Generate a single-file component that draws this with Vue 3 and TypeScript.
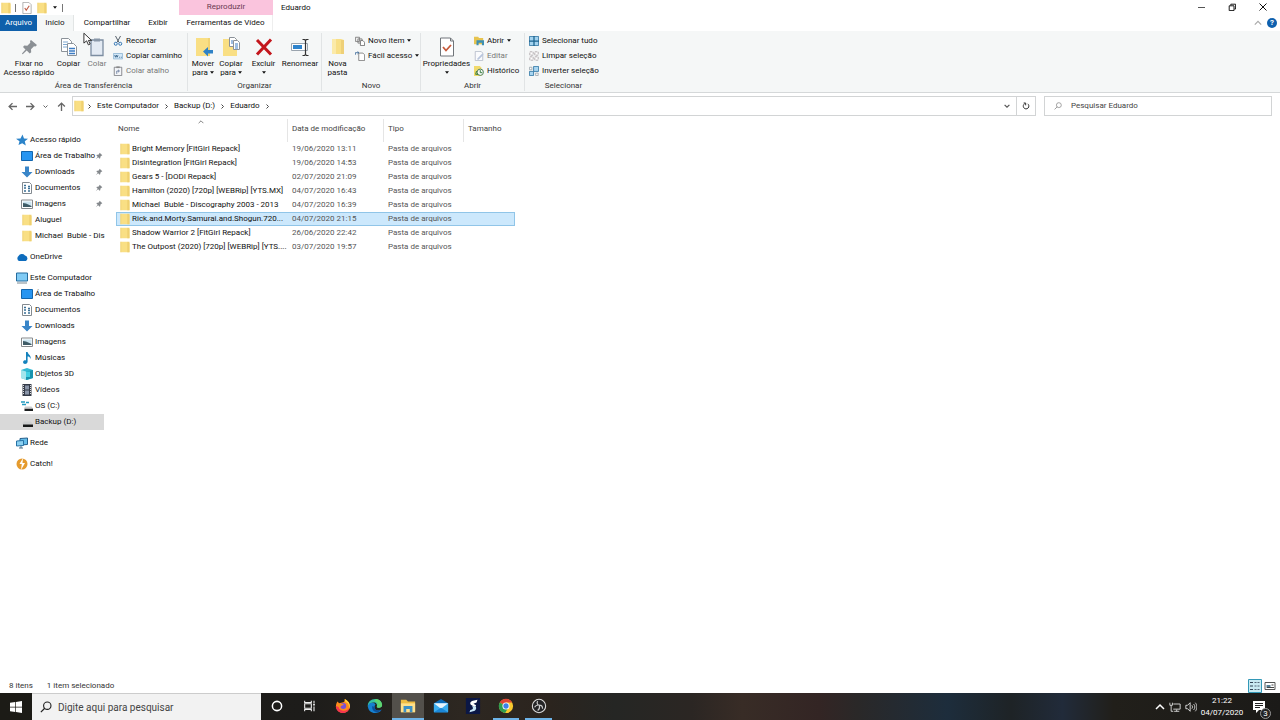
<script setup lang="ts">
import { ref } from 'vue'

interface NavItem { label: string; icon: string; pinned?: boolean; root?: boolean }
interface FileRow { name: string; date: string }
interface SmallCmd { label: string; icon: string; menu?: boolean; off?: boolean }
interface BigCmd { lines: string[]; icon: string; menu?: boolean; off?: boolean }
interface Group { key: string; title: string; big: BigCmd[]; small: SmallCmd[] }

const groups: Group[] = [
  {
    key: 'clipboard',
    title: 'Área de Transferência',
    big: [
      { lines: ['Fixar no', 'Acesso rápido'], icon: 'pin' },
      { lines: ['Copiar'], icon: 'copy' },
      { lines: ['Colar'], icon: 'paste', off: true },
    ],
    small: [
      { label: 'Recortar', icon: 'cut' },
      { label: 'Copiar caminho', icon: 'path' },
      { label: 'Colar atalho', icon: 'shortcut', off: true },
    ],
  },
  {
    key: 'organize',
    title: 'Organizar',
    big: [
      { lines: ['Mover', 'para'], icon: 'move', menu: true },
      { lines: ['Copiar', 'para'], icon: 'copyto', menu: true },
      { lines: ['Excluir', ''], icon: 'delete', menu: true },
      { lines: ['Renomear'], icon: 'rename' },
    ],
    small: [],
  },
  {
    key: 'new',
    title: 'Novo',
    big: [{ lines: ['Nova', 'pasta'], icon: 'newfolder' }],
    small: [
      { label: 'Novo item', icon: 'newitem', menu: true },
      { label: 'Fácil acesso', icon: 'easy', menu: true },
    ],
  },
  {
    key: 'open',
    title: 'Abrir',
    big: [{ lines: ['Propriedades', ''], icon: 'props', menu: true }],
    small: [
      { label: 'Abrir', icon: 'open', menu: true },
      { label: 'Editar', icon: 'edit', off: true },
      { label: 'Histórico', icon: 'history' },
    ],
  },
  {
    key: 'select',
    title: 'Selecionar',
    big: [],
    small: [
      { label: 'Selecionar tudo', icon: 'selall' },
      { label: 'Limpar seleção', icon: 'selnone' },
      { label: 'Inverter seleção', icon: 'selinv' },
    ],
  },
]

const nav: NavItem[][] = [
  [
    { label: 'Acesso rápido', icon: 'star', root: true },
    { label: 'Área de Trabalho', icon: 'desktop', pinned: true },
    { label: 'Downloads', icon: 'down', pinned: true },
    { label: 'Documentos', icon: 'doc', pinned: true },
    { label: 'Imagens', icon: 'image', pinned: true },
    { label: 'Aluguel', icon: 'folder' },
    { label: 'Michael  Bublé - Dis', icon: 'folder' },
  ],
  [{ label: 'OneDrive', icon: 'cloud', root: true }],
  [
    { label: 'Este Computador', icon: 'pc', root: true },
    { label: 'Área de Trabalho', icon: 'desktop' },
    { label: 'Documentos', icon: 'doc' },
    { label: 'Downloads', icon: 'down' },
    { label: 'Imagens', icon: 'image' },
    { label: 'Músicas', icon: 'music' },
    { label: 'Objetos 3D', icon: 'cube' },
    { label: 'Vídeos', icon: 'video' },
    { label: 'OS (C:)', icon: 'osdrive' },
    { label: 'Backup (D:)', icon: 'drive' },
  ],
  [{ label: 'Rede', icon: 'network', root: true }],
  [{ label: 'Catch!', icon: 'catch', root: true }],
]

const files: FileRow[] = [
  { name: 'Bright Memory [FitGirl Repack]', date: '19/06/2020 13:11' },
  { name: 'Disintegration [FitGirl Repack]', date: '19/06/2020 14:53' },
  { name: 'Gears 5 - [DODI Repack]', date: '02/07/2020 21:09' },
  { name: 'Hamilton (2020) [720p] [WEBRip] [YTS.MX]', date: '04/07/2020 16:43' },
  { name: 'Michael  Bublé - Discography 2003 - 2013', date: '04/07/2020 16:39' },
  { name: 'Rick.and.Morty.Samurai.and.Shogun.720...', date: '04/07/2020 21:15' },
  { name: 'Shadow Warrior 2 [FitGirl Repack]', date: '26/06/2020 22:42' },
  { name: 'The Outpost (2020) [720p] [WEBRip] [YTS....', date: '03/07/2020 19:57' },
]

const crumbs: string[] = ['Este Computador', 'Backup (D:)', 'Eduardo']
const apps: { icon: string; name: string; state?: string }[] = [
  { icon: 'cortana', name: 'Cortana' },
  { icon: 'taskview', name: 'Visão de Tarefas' },
  { icon: 'firefox', name: 'Firefox' },
  { icon: 'edge', name: 'Edge' },
  { icon: 'explorer', name: 'Explorador de Arquivos', state: 'active' },
  { icon: 'mail', name: 'Email' },
  { icon: 'sapp', name: 'S' },
  { icon: 'chrome', name: 'Chrome', state: 'running' },
  { icon: 'obs', name: 'OBS', state: 'running' },
]

const selected = ref(5)
const query = ref('')
const taskQuery = ref('')
</script>

<template>
  <svg class="sprite" aria-hidden="true">
    <symbol id="folder" viewBox="0 0 16 16"><path d="M2 1h9l3 2v12H2z" fill="#f9df84" /><path d="M11 1h3v14h-3z" fill="#efd070" /><path d="M2 1h1v14H2z" fill="#edd073" /></symbol>
    <symbol id="sheet" viewBox="0 0 16 16"><path d="M2.5.5h8l3 3v12h-11z" fill="#fff" stroke="#999" /><path d="m5 8 2 3 4-6" fill="none" stroke="#c0604a" stroke-width="1.6" /></symbol>
    <symbol id="pin" viewBox="0 0 20 20"><path d="m12 3 6 5-1.500 1.500-1.500-.3-3 3 .2 3-1.500 1.300-3-3L4 17l-1 .2.2-1L6.500 12.500 4 10l1.300-1.500 3 .2 3-3L11 4z" fill="#8b9095" /></symbol>
    <symbol id="copy" viewBox="0 0 18 20"><path d="M1.500 1.500h7l3 3v10h-10z" fill="#fff" stroke="#8b9299" /><path d="M3 5h5M3 7.500h5M3 10h4" stroke="#7da7d0" /><path d="M7.500 6.500h6l3 3v9h-9z" fill="#fff" stroke="#8b9299" /><path d="M9 11.500h6M9 14h6M9 16.500h6" stroke="#3c7cc4" stroke-width="1.300" /></symbol>
    <symbol id="paste" viewBox="0 0 18 20"><path d="M3 3h12v15.500H3z" fill="#e3eaf3" stroke="#7c8da1" stroke-width="1.300" /><path d="M6 1.500h6v3H6z" fill="#8997a8" /></symbol>
    <symbol id="cut" viewBox="0 0 12 12"><path d="M3 0l4 7.500M9 0 5 7.500" stroke="#555f69" stroke-width="1.200" fill="none" /><circle cx="3.300" cy="9.300" r="1.800" fill="none" stroke="#3276b5" stroke-width="1.200" /><circle cx="8.700" cy="9.300" r="1.800" fill="none" stroke="#3276b5" stroke-width="1.200" /></symbol>
    <symbol id="path" viewBox="0 0 12 12"><path d="M.5 3h11v6.500H.5z" fill="#d3e8f8" stroke="#8fb6d4" /><path d="m2 5 1 2.500L4 5l1 2.500L6 5M7.500 7.500h1M9.500 7.500h1" stroke="#2d5a82" fill="none" /></symbol>
    <symbol id="shortcut" viewBox="0 0 12 12"><path d="M1.500 1.500h9v10h-9z" fill="#f3f5f8" stroke="#77797f" /><path d="M4 .5h4v2H4z" fill="#888" /><path d="M4.500 9.500V6h3M6 4.500 7.700 6 6 7.500" fill="none" stroke="#66789b" /></symbol>
    <symbol id="move" viewBox="0 0 20 20"><path d="M3 1h14v18H3z" fill="#f9df84" /><path d="M15 1h2v18h-2z" fill="#f1d374" /><path d="m10 14.500 5-4.500v3h5v3.500h-5v3z" fill="#2f82c6" /></symbol>
    <symbol id="copyto" viewBox="0 0 20 20"><path d="M2 2h14v17H2z" fill="#f9df84" /><path d="M8.500.5h5l2 2v7h-7z" fill="#fff" stroke="#8b9299" /><path d="M12.500 3.500h4l2 2v7h-6z" fill="#fff" stroke="#8b9299" /><path d="M14 7h3M14 9h3M14 11h3M10 4h2M10 6h2" stroke="#3c7cc4" /></symbol>
    <symbol id="delete" viewBox="0 0 20 20"><path d="m3 3 14 14.500M17 2.500 3 17.500" stroke="#c3161c" stroke-width="3" fill="none" /></symbol>
    <symbol id="rename" viewBox="0 0 20 20"><path d="M1.500 6.500h16v7h-16z" fill="#fff" stroke="#9aa4ae" /><path d="M3 8h9v4H3z" fill="#2e83cc" /><path d="M12.500 2.500h2l1 1 1-1h2M15.500 3.500v14M12.500 18.500h2l1-1 1 1h2" fill="none" stroke="#333" stroke-width="1.200" /></symbol>
    <symbol id="newfolder" viewBox="0 0 20 20"><path d="M4 2h9l3 1v14H4z" fill="#f8df86" /><path d="M4 2h4v15H4z" fill="#fbeaa9" /><path d="M13 3h3v14h-3z" fill="#eed078" /></symbol>
    <symbol id="newitem" viewBox="0 0 12 12"><path d="M.5 1.500h5v5h-5zM3.500 3.500h5v5h-5z" fill="#eee" stroke="#777" /><path d="M6.500 5.500h3l2 2v4h-5z" fill="#fff" stroke="#666" /></symbol>
    <symbol id="easy" viewBox="0 0 12 12"><path d="M4.500 2.500h5l2 2v7h-7z" fill="#fff" stroke="#777" /><path d="M.5 4.500V2h4M3 .5 4.700 2 3 3.500" fill="none" stroke="#3a6797" /></symbol>
    <symbol id="props" viewBox="0 0 18 20"><path d="M2.500 1h10l3 3v15h-13z" fill="#fff" stroke="#70757a" /><path d="M12.500 1v3h3" fill="none" stroke="#70757a" /><path d="m5 10 3 3.500L13 8" fill="none" stroke="#c65a3b" stroke-width="1.800" /></symbol>
    <symbol id="open" viewBox="0 0 12 12"><path d="M0 1h5l1 1.500h5V10H0z" fill="#e7c44f" /><path d="M3 5h9v6H9.500V8h-4v3H3z" fill="#3e8fb2" /></symbol>
    <symbol id="edit" viewBox="0 0 12 12"><path d="M1.500.5h7l2 2v9h-9z" fill="#fafbfd" stroke="#b3bac8" /><path d="m4 9 6-6 1.500 1.500-6 6H4z" fill="#b9c6dd" /></symbol>
    <symbol id="history" viewBox="0 0 12 12"><path d="M0 0h7l2 2v10H0z" fill="#f1da6b" /><circle cx="7.500" cy="7.500" r="3.800" fill="#f5f7f5" stroke="#53825a" stroke-width="1.200" /><path d="M7.500 5v3H10M3 6l-1 4h3" stroke="#398044" fill="none" stroke-width="1.200" /></symbol>
    <symbol id="selall" viewBox="0 0 12 12"><path d="M.5.5h11v11H.5z" fill="#a4d3ef" stroke="#2b719f" /><path d="M6 0v12M0 6h12" stroke="#1b638f" stroke-width="1.500" /></symbol>
    <symbol id="selnone" viewBox="0 0 12 12"><path d="M1 1h4v4H1zM7 1h4v4H7zM1 7h4v4H1zM7 7h4v4H7z" fill="#fff" stroke="#a79fa2" stroke-dasharray="3 1" /></symbol>
    <symbol id="selinv" viewBox="0 0 12 12"><path d="M5.500.5h6v6h-6zM.5 6.500h5v5h-5z" fill="#a8d5f0" stroke="#2c74a2" /><path d="M.5 1.500h3v3h-3zM8 8.500h3v3H8z" fill="#fff" stroke="#98a2a9" /></symbol>
    <symbol id="star" viewBox="0 0 12 12"><path d="m6.500.5 1.500 4 4 .3-3.200 2.500 1 4.200-3.600-2.200L2.500 11l1-3.800L0 4.800l4.500-.3z" fill="#2b83c9" /></symbol>
    <symbol id="desktop" viewBox="0 0 12 12"><path d="M.5 1.500h11v9H.5z" fill="#2795f1" stroke="#1265ad" /></symbol>
    <symbol id="down" viewBox="0 0 12 12"><path d="M4 .5h4v5.500h3.500L6 11.500.5 6H4z" fill="#3985c8" /></symbol>
    <symbol id="doc" viewBox="0 0 12 12"><path d="M1.500.5h7l2 2v9h-9z" fill="#fff" stroke="#838a90" /><path d="M3 3.500h2M3 6h2M3 9h2M7 4.500h2M7 6.500h2M7 9h2" stroke="#3b7096" stroke-width="1.400" /></symbol>
    <symbol id="image" viewBox="0 0 12 12"><path d="M.5 2h11v8.500H.5z" fill="#fff" stroke="#85898c" /><path d="M2 3.500h8.500V9H2z" fill="#cbe4f0" /><path d="M2 5l3 .5L10.500 8v1H2z" fill="#3f5c67" /></symbol>
    <symbol id="cloud" viewBox="0 0 12 12"><path d="M3 10a3 3 0 0 1-.5-5A4 4 0 0 1 9 4.500 3 3 0 0 1 10 10z" fill="#0d6cbd" /></symbol>
    <symbol id="pc" viewBox="0 0 12 12"><path d="M.5 1h11v8H.5z" fill="#80cbf5" stroke="#256c9e" /><path d="M1 11h10" stroke="#7a8992" /></symbol>
    <symbol id="music" viewBox="0 0 12 12"><path d="M5 0h1.600c.5 3 4 3 2.800 7C9 5 8 4.500 6.600 4.500V10c-.5 2.500-4.500 2.500-4.500.3C2.100 8.500 4 8 5 8.500z" fill="#1482bd" /></symbol>
    <symbol id="cube" viewBox="0 0 12 12"><path d="M0 2 6 0l6 2v8l-6 2-6-2z" fill="#32bad4" /><path d="M0 2l5 1.500V12L0 10z" fill="#a3e5ec" /><path d="M5 3.500 12 2v8l-7 2z" fill="#1993ae" /><path d="M5 3.500h4V9H5z" fill="#42cfe2" /></symbol>
    <symbol id="video" viewBox="0 0 12 12"><path d="M1.500 0h9v12h-9z" fill="#343b48" /><path d="M4 1.500h4v4H4zM4 6.500h4v4H4z" fill="#8a95a9" /><path d="M2.500 1v10M9.500 1v10" stroke="#ddd" stroke-dasharray="1 1" /></symbol>
    <symbol id="osdrive" viewBox="0 0 12 12"><path d="M0 2h4M1 4.500h4M5 2.500h3" stroke="#229ac0" stroke-width="1.400" /><path d="M3.500 8.500H12V11H3.500z" fill="#1c1f20" /><path d="M4 6.500h6.500l1.500 2H3z" fill="#c9cccd" /></symbol>
    <symbol id="drive" viewBox="0 0 12 12"><path d="M3 5.500h7l2 3H1z" fill="#cdcfd0" /><path d="M2 8.500h10V11H2z" fill="#17191a" /></symbol>
    <symbol id="network" viewBox="0 0 12 12"><path d="M4 1.500 11.500 1v6.500L4 8z" fill="#64bdea" stroke="#245f8c" /><path d="M.5 4 7.500 3.500v5L.5 9z" fill="#8bd0f1" stroke="#2672a5" /><path d="M3 11h4M5 9v2" stroke="#4a6e88" /></symbol>
    <symbol id="catch" viewBox="0 0 12 12"><circle cx="6" cy="6" r="5.500" fill="#e59b2e" /><path d="M7 0 3.500 6h2.300L5 12 9 5H6.500z" fill="#fff" /></symbol>
    <symbol id="smallpin" viewBox="0 0 12 12"><path d="m7 1 4 4-1.300.5L8 7v2L7 10 4.800 7.700 1 11l3-4L2 5l1-1h2L6.500 2.300z" fill="#84888c" /></symbol>
    <symbol id="caret" viewBox="0 0 6 4"><path d="M0 0h6L3 4z" fill="currentColor" /></symbol>
    <symbol id="chev" viewBox="0 0 10 10"><path d="m3 1 4 4-4 4" fill="none" stroke="currentColor" stroke-width="2" /></symbol>
    <symbol id="chevdown" viewBox="0 0 10 10"><path d="m1 3 4 4 4-4" fill="none" stroke="currentColor" stroke-width="2" /></symbol>
    <symbol id="chevup" viewBox="0 0 10 10"><path d="m1 7 4-4 4 4" fill="none" stroke="currentColor" stroke-width="1.500" /></symbol>
    <symbol id="left" viewBox="0 0 12 12"><path d="M12 6H2M6 1.500 1.500 6 6 10.500" fill="none" stroke="currentColor" stroke-width="1.800" /></symbol>
    <symbol id="right" viewBox="0 0 12 12"><path d="M0 6h10M6 1.500 10.500 6 6 10.500" fill="none" stroke="currentColor" stroke-width="1.800" /></symbol>
    <symbol id="up" viewBox="0 0 12 12"><path d="M6 12V2M1.500 6 6 1.500 10.500 6" fill="none" stroke="currentColor" stroke-width="1.800" /></symbol>
    <symbol id="refresh" viewBox="0 0 12 12"><path d="M4 2.500a4.200 4.200 0 1 0 4.500.2M2.500 1.500h3v3.500" fill="none" stroke="#333" stroke-width="1.500" /></symbol>
    <symbol id="lens" viewBox="0 0 14 14"><circle cx="8.500" cy="5.500" r="4.300" fill="none" stroke="currentColor" stroke-width="1.300" /><path d="M5.500 8.500 1 13" stroke="currentColor" stroke-width="1.400" /></symbol>
    <symbol id="min" viewBox="0 0 10 10"><path d="M2 5.500h7" stroke="#555" /></symbol>
    <symbol id="restore" viewBox="0 0 10 10"><path d="M1.500 3.500h6v6h-6zM3.500 3V1.500h6v6H8" fill="none" stroke="#111" stroke-width="1.200" /></symbol>
    <symbol id="close" viewBox="0 0 10 10"><path d="m1.500 1.500 7 7M8.500 1.500l-7 7" stroke="#111" /></symbol>
    <symbol id="windows" viewBox="0 0 12 12"><path d="M0 1.700 5.300 1v4.700H0zM6 .9 12 0v5.700H6zM0 6.400h5.300V11L0 10.300zM6 6.400h6V12l-6-.9z" fill="#fff" /></symbol>
    <symbol id="cortana" viewBox="0 0 18 18"><circle cx="9" cy="9" r="5.200" fill="none" stroke="#fff" stroke-width="1.700" /></symbol>
    <symbol id="taskview" viewBox="0 0 18 18"><path d="M3 6.500h7.500v5H3zM3 3v2h7.500V3M3 15v-2h7.500v2M13.500 3v3M13.500 9.500V15" fill="none" stroke="#eee" stroke-width="1.200" /><path d="M12.500 6.500h2v2h-2z" fill="#eee" /></symbol>
    <symbol id="firefox" viewBox="0 0 18 18"><path d="M11 1c4 2 6 5 5.800 9A8 8 0 0 1 1 10c0-3 1-5 2-6l1.500 2L8 5c2 0 3-1 3-4z" fill="#ff8b1b" /><path d="M11 1c5 3 7 7 5 11 0-4-1-6-3-7-2-1-2-2-2-4z" fill="#ffd23c" /><path d="M1 9c0 5 4 8 8 8s7-3 7.500-6C13 16 5 15 4 10z" fill="#f5364f" /><circle cx="9.300" cy="9" r="3.300" fill="#7951d5" /><path d="M5 7c2-1 5 0 5 1-2 0-3 1-4 2z" fill="#ff8b1b" /></symbol>
    <symbol id="edge" viewBox="0 0 18 18"><path d="M1 10C0 4 5 1 9 1c5 0 8 3 8 7 0 3-4 4-6 2 1-3-1-5-3-5-4 0-6 2-7 5z" fill="#34c1a3" /><path d="M10 1c5 .5 7 4 7 7 0 3-4 4-6 2 2-4 0-6-3-6z" fill="#5fd46e" /><path d="M1 9c0 5 4 8 8 8 3 0 6-1 7.500-4-4 2-8 1-8-3 0-2 1-2 1-3-2-3-8-2-8.500 2z" fill="#1680cf" /><path d="M6 9c-1 4 2 7 6 7 2-.4 4-2 4.500-3-4 2-8 1-8-3z" fill="#0b4f9a" /></symbol>
    <symbol id="explorer" viewBox="0 0 18 18"><path d="M1 2h6l2 2h8v12H1z" fill="#f0bd42" /><path d="M1 6h16v10H1z" fill="#ffe08b" /><path d="M4 9h10v7h-3v-3.500H7V16H4z" fill="#3c90c6" /></symbol>
    <symbol id="mail" viewBox="0 0 18 18"><path d="m1 6 8-5 8 5v10H1z" fill="#0c6bb9" /><path d="M1 6h16v10H1z" fill="#3badef" /><path d="m1 6 8 6 8-6z" fill="#e8f5fe" /><path d="m1 16 8-5 8 5z" fill="#1b87d8" /></symbol>
    <symbol id="sapp" viewBox="0 0 18 18"><path d="M1 0h16v18H1z" fill="#0b1745" /><path d="M14 2 9 3C6 3.500 5 6 7 8l4 2c1 0 2-1 1-2L9.500 6.500 13 5z" fill="#fff" /><path d="m5 16 4-1c4-1 4-4 3-5.500L8 9c1 2 1.500 3 0 4l-2 .5z" fill="#c9e7f8" /></symbol>
    <symbol id="chrome" viewBox="0 0 18 18"><circle cx="9" cy="9" r="8" fill="#f9c92e" /><path d="M9 9 2 5a8 8 0 0 1 14 0H9z" fill="#df4535" /><path d="M9 9 2 5a8 8 0 0 0 6 12l4-7z" fill="#2f9e50" /><circle cx="9" cy="9" r="4" fill="#fff" /><circle cx="9" cy="9" r="3" fill="#3c82e8" /></symbol>
    <symbol id="obs" viewBox="0 0 18 18"><circle cx="9" cy="9" r="7.500" fill="#242426" stroke="#ddd" stroke-width="1.200" /><path d="M7.500 3.500c-1.500 2.500 0 4.500 2 4.500s3.500 1.500 3.500 4M9.500 8c-2.500-.5-4.500.5-5.500 2.500M9.500 8.500c.5 2.500-.5 4.500-2 5.500" fill="none" stroke="#ccc" stroke-width="1.300" /></symbol>
    <symbol id="lan" viewBox="0 0 14 12"><path d="M5 2.500h8v6H5M9 9v2M6 11h6M1 1v3h3V1M2.500 4v7H5" fill="none" stroke="#e8e8e8" /></symbol>
    <symbol id="speaker" viewBox="0 0 14 12"><path d="M1 4h2l3-3v10L3 8H1z" fill="none" stroke="#eee" /><path d="M8 4c1 1 1 3 0 4M10 2.500c2 2 2 5 0 7M12 1c2.500 3 2.500 7 0 10" fill="none" stroke="#ddd" /></symbol>
    <symbol id="note" viewBox="0 0 14 14"><path d="M1 1h12v9H7l-3 3v-3H1z" fill="#fff" /><path d="M3 3.500h8M3 5.500h8M3 7.500h5" stroke="#222" /></symbol>
    <symbol id="details" viewBox="0 0 14 14"><path d="M.5.5h13v13H.5z" fill="#c9eaf2" stroke="#3398b7" /><path d="M2 3.500h3M2 7h3M2 10.500h3" stroke="#345" /><path d="M6.500 3.500h6M6.500 7h6M6.500 10.500h6" stroke="#567" stroke-dasharray="2 1" /></symbol>
    <symbol id="large" viewBox="0 0 12 12"><path d="M1 2.500h10v7H1z" fill="#fff" stroke="#555" /><path d="M2.500 5h4v3h-4z" fill="#577f94" /><path d="M7.500 5h2M3 7.500h7" stroke="#444" /></symbol>
    <symbol id="arrow" viewBox="0 0 10 16"><path d="M1 1v11l3-2.500 2 4.500 2-1-2-4h3.500z" fill="#fff" stroke="#222" /></symbol>
  </svg>

  <div class="window">
    <header class="top">
      <div class="top-left">
        <div class="quick">
          <svg class="i12"><use href="#folder" /></svg><span class="bar"></span>
          <button class="plain" aria-label="Propriedades"><svg class="i12"><use href="#sheet" /></svg></button>
          <button class="plain" aria-label="Nova pasta"><svg class="i12"><use href="#folder" /></svg></button>
          <button class="plain" aria-label="Personalizar"><svg class="caret"><use href="#caret" /></svg></button><span class="bar"></span>
        </div>
        <nav class="tabs">
          <button class="tab file">Arquivo</button>
          <button class="tab active">Início</button>
          <button class="tab share">Compartilhar</button>
          <button class="tab view">Exibir</button>
        </nav>
      </div>
      <div class="context">
        <div class="context-title">Reproduzir</div>
        <button class="tab tools">Ferramentas de Vídeo</button>
      </div>
      <div class="caption">Eduardo</div>
      <div class="top-right">
        <div class="winbtns">
          <button class="plain" aria-label="Minimizar"><svg class="i10"><use href="#min" /></svg></button>
          <button class="plain" aria-label="Restaurar"><svg class="i8"><use href="#restore" /></svg></button>
          <button class="plain" aria-label="Fechar"><svg class="i10"><use href="#close" /></svg></button>
        </div>
        <div class="helpers">
          <button class="plain faint" aria-label="Recolher"><svg class="i8"><use href="#chevup" /></svg></button>
          <button class="help">?</button>
        </div>
      </div>
    </header>

    <section class="ribbon">
      <div v-for="g in groups" :key="g.key" class="group" :class="g.key">
        <div class="cmds">
          <button v-for="b in g.big" :key="b.icon" class="big" :class="{ off: b.off }">
            <svg class="i20"><use :href="'#' + b.icon" /></svg>
            <span v-for="(l, i) in b.lines" :key="i" class="line">{{ l }}<svg v-if="b.menu && i === b.lines.length - 1" class="caret"><use href="#caret" /></svg></span>
          </button>
          <div v-if="g.small.length" class="smalls">
            <button v-for="s in g.small" :key="s.icon" class="small" :class="{ off: s.off }">
              <svg class="i10"><use :href="'#' + s.icon" /></svg>{{ s.label }}<svg v-if="s.menu" class="caret"><use href="#caret" /></svg>
            </button>
          </div>
        </div>
        <div class="title">{{ g.title }}</div>
      </div>
    </section>

    <section class="address">
      <div class="history">
        <button class="plain" aria-label="Voltar"><svg class="i9"><use href="#left" /></svg></button>
        <button class="plain" aria-label="Avançar"><svg class="i9"><use href="#right" /></svg></button>
        <button class="plain" aria-label="Recentes"><svg class="i5"><use href="#chevdown" /></svg></button>
        <button class="plain" aria-label="Acima"><svg class="i9"><use href="#up" /></svg></button>
      </div>
      <div class="pathbox">
        <svg class="i12"><use href="#folder" /></svg>
        <svg class="i5 sep first"><use href="#chev" /></svg>
        <template v-for="c in crumbs" :key="c">
          <button class="crumb">{{ c }}</button>
          <svg class="i5 sep"><use href="#chev" /></svg>
        </template>
        <button class="plain drop" aria-label="Locais"><svg class="i6"><use href="#chevdown" /></svg></button>
        <button class="plain reload" aria-label="Atualizar"><svg class="i8"><use href="#refresh" /></svg></button>
      </div>
      <label class="searchbox">
        <svg class="i8"><use href="#lens" /></svg>
        <input v-model="query" type="text" placeholder="Pesquisar Eduardo" aria-label="Pesquisar Eduardo" />
      </label>
    </section>

    <main class="body">
      <nav class="side">
        <ul v-for="(s, si) in nav" :key="si">
          <li v-for="n in s" :key="n.label">
            <a href="#" :class="{ root: n.root, current: n.icon === 'drive' }" @click.prevent>
              <svg class="i12"><use :href="'#' + n.icon" /></svg>
              <span class="name">{{ n.label }}</span>
              <svg v-if="n.pinned" class="i8"><use href="#smallpin" /></svg>
            </a>
          </li>
        </ul>
      </nav>
      <div class="list">
        <table>
          <colgroup><col class="c-name" /><col class="c-date" /><col class="c-type" /><col class="c-size" /></colgroup>
          <thead>
            <tr>
              <th class="sorted">Nome<svg class="i6 mark"><use href="#chevup" /></svg></th>
              <th>Data de modificação</th><th>Tipo</th><th>Tamanho</th>
            </tr>
          </thead>
          <tbody>
            <tr v-for="(f, i) in files" :key="f.name" :class="{ picked: i === selected }" @click="selected = i">
              <td><div class="file-name"><svg class="i12"><use href="#folder" /></svg><span>{{ f.name }}</span></div></td>
              <td>{{ f.date }}</td><td>Pasta de arquivos</td><td></td>
            </tr>
          </tbody>
        </table>
      </div>
    </main>

    <footer class="status">
      <span>8 itens</span><span>1 item selecionado</span>
      <div class="modes">
        <button class="plain" aria-label="Detalhes"><svg class="i14"><use href="#details" /></svg></button>
        <button class="plain" aria-label="Ícones grandes"><svg class="i12"><use href="#large" /></svg></button>
      </div>
    </footer>

    <footer class="taskbar">
      <button class="plain start" aria-label="Iniciar"><svg class="i12"><use href="#windows" /></svg></button>
      <label class="tasksearch">
        <svg class="i12"><use href="#lens" /></svg>
        <input v-model="taskQuery" type="text" placeholder="Digite aqui para pesquisar" aria-label="Digite aqui para pesquisar" />
      </label>
      <div class="apps">
        <button v-for="a in apps" :key="a.icon" class="plain app" :class="a.state" :aria-label="a.name"><svg class="i16"><use :href="'#' + a.icon" /></svg></button>
      </div>
      <div class="tray">
        <button class="plain" aria-label="Ícones ocultos"><svg class="i10"><use href="#chevup" /></svg></button>
        <button class="plain" aria-label="Rede"><svg class="i12"><use href="#lan" /></svg></button>
        <button class="plain" aria-label="Volume"><svg class="i12"><use href="#speaker" /></svg></button>
        <div class="clock"><span>21:22</span><span>04/07/2020</span></div>
        <button class="plain notes" aria-label="Notificações"><svg class="i14"><use href="#note" /></svg><span class="badge">3</span></button>
      </div>
    </footer>
    <svg class="pointer"><use href="#arrow" /></svg>
  </div>
</template>

<style>
body { margin: 0; background: #fff; }
</style>

<style scoped>
.sprite { position: absolute; width: 0; height: 0; }
.window { position: relative; display: flex; flex-direction: column; min-height: 100vh; overflow: hidden; background: #fff; color: #111; font-family: Roboto, "Noto Sans", sans-serif; font-size: 8px; line-height: 10px; }
button { font: inherit; color: inherit; background: none; border: 0; padding: 0; margin: 0; white-space: nowrap; }
input { font: inherit; color: #444; background: none; border: 0; padding: 0; outline: 0; flex: 1; min-width: 0; }
input::placeholder { color: #444; opacity: 1; }
svg { flex: none; }
.plain { display: flex; align-items: center; justify-content: center; }
.i5 { width: 5px; height: 5px; } .i6 { width: 6px; height: 6px; } .i8 { width: 8px; height: 8px; } .i9 { width: 9px; height: 9px; } .i10 { width: 10px; height: 10px; }
.i12 { width: 12px; height: 12px; } .i14 { width: 14px; height: 14px; } .i16 { width: 16px; height: 16px; } .i20 { width: 20px; height: 20px; }
.caret { width: 4px; height: 3px; }

.top { display: flex; height: 31px; }
.top-left { width: 179px; }
.quick { display: flex; align-items: center; gap: 3px; height: 15px; }
.quick .bar { width: 1px; height: 8px; margin-right: 2px; background: #777; }
.quick .caret { margin: 0 2px; }
.tabs { display: flex; height: 16px; }
.tab { height: 16px; text-align: center; }
.file { width: 37px; background: #0f60ab; color: #fff; }
.active { background: #f5f7f7; }
.tab.active { width: 37px; border-right: 1px solid #e2e5e5; }
.share { width: 66px; }
.view { width: 36px; }
.context { width: 94px; }
.context-title { height: 15px; line-height: 14px; text-align: center; background: #fac4dd; color: #6b3a52; }
.tools { width: 94px; border-right: 1px solid #eee; }
.caption { padding-left: 8px; line-height: 16px; }
.top-right { margin-left: auto; }
.winbtns { display: flex; height: 14px; padding-right: 2px; margin-bottom: 1px; }
.winbtns button { width: 31px; }
.helpers { display: flex; justify-content: flex-end; align-items: center; gap: 5px; height: 16px; padding-right: 3px; }
.faint { color: #aaa; }
.help { width: 10px; height: 10px; border-radius: 50%; background: #0e60ae; color: #fff; font-weight: bold; }

.ribbon { display: flex; height: 61px; background: #f5f7f7; border-bottom: 1px solid #d5d8d9; }
.group { display: flex; flex-direction: column; border-right: 1px solid #e1e4e5; margin: 2px 0 1px; box-sizing: border-box; }
.group.select { border-right: 0; }
.cmds { display: flex; flex: 1; }
.title { line-height: 10px; text-align: center; color: #333; }
.clipboard { width: 188px; } .organize { width: 134px; } .new { width: 99px; } .open { width: 104px; } .select { width: 77px; }
.big { display: flex; flex-direction: column; align-items: center; justify-content: flex-start; line-height: 9px; padding-top: 4px; }
.big .i20 { margin-bottom: 2px; }
.line { display: flex; align-items: center; gap: 2px; height: 9px; }
.clipboard .cmds { display: grid; grid-template-columns: 50px 29px 28px 1fr; padding-left: 4px; }
.organize .cmds { display: grid; grid-template-columns: 28px 28px 37px 36px; padding-left: 1px; }
.new .cmds { display: grid; grid-template-columns: 31px 1fr; }
.open .cmds { display: grid; grid-template-columns: 51px 1fr; }
.smalls { display: flex; flex-direction: column; padding-left: 2px; }
.select .smalls { padding-left: 4px; }
.small { display: flex; align-items: center; gap: 3px; height: 15px; }
.off { color: #777; }

.address { display: flex; align-items: center; height: 26px; padding-right: 8px; }
.history { display: flex; align-items: center; justify-content: space-between; width: 72px; padding: 0 6px 0 8px; color: #666; box-sizing: border-box; }
.pathbox { display: flex; flex: 1; align-items: center; height: 20px; box-sizing: border-box; border: 1px solid #d2d4d5; }
.pathbox .sep { margin: 0 5px; color: #444; }
.pathbox .first { margin-left: 2px; }
.drop { margin-left: auto; width: 18px; height: 18px; color: #555; }
.reload { width: 19px; height: 18px; border-left: 1px solid #d2d4d5; }
.searchbox { display: flex; align-items: center; gap: 9px; width: 228px; height: 20px; margin-left: 8px; padding-left: 9px; box-sizing: border-box; border: 1px solid #d2d4d5; color: #888; }

.body { display: flex; flex: 1; }
.side { width: 104px; padding-top: 13px; }
ul { list-style: none; margin: 0 0 5px; padding: 0; }
.side a { display: flex; align-items: center; gap: 2px; height: 16px; padding: 0 0 0 21px; color: inherit; text-decoration: none; }
.side a.root { padding-left: 16px; }
.side .name { flex: 1; min-width: 0; white-space: pre; }
.side a .i8 { margin-right: 1px; }
.side a.current { background: #d9d9d9; }
.list { flex: 1; padding-left: 12px; }
table { width: 399px; table-layout: fixed; border-collapse: separate; border-spacing: 0; }
.c-name { width: 172px; } .c-date { width: 96px; } .c-type { width: 80px; } .c-size { width: 51px; }
th { position: relative; height: 23px; padding: 0 0 3px 4px; box-sizing: border-box; text-align: left; font-weight: normal; color: #444; border-right: 1px solid #e5e5e5; white-space: nowrap; }
th:first-child { padding-left: 2px; }
th:last-child { border-right: 0; }
.mark { position: absolute; left: 82px; top: 0; color: #777; }
td { height: 14px; padding: 0 0 0 4px; box-sizing: border-box; color: #555; white-space: nowrap; line-height: 12px; }
td:first-child { padding-left: 3px; color: #111; }
.file-name { display: flex; align-items: center; gap: 1px; height: 12px; white-space: pre; }
.picked td { background: #cce8fc; border: 1px solid #90c5e8; border-width: 1px 0; }
.picked td:first-child { border-left-width: 1px; padding-left: 2px; }
.picked td:last-child { border-right-width: 1px; }

.status { display: flex; align-items: center; gap: 14px; height: 15px; padding: 0 4px 0 9px; color: #333; }
.modes { display: flex; gap: 2px; margin-left: auto; }
.taskbar { display: flex; height: 27px; color: #fff; background: linear-gradient(90deg, #1c1b16 0%, #1d1c1a 24%, #2d2721 36%, #2b241e 43%, #252624 48%, #2b2623 54%, #382c26 58%, #332524 64%, #2a2828 67%, #1d2d3c 74%, #1e2326 79%, #212b3a 83%, #211f1a 87%, #1b1a18 100%); }
.start { width: 32px; }
.tasksearch { display: flex; align-items: center; gap: 6px; width: 229px; box-sizing: border-box; padding-left: 8px; background: #f2f2f2; color: #222; font-size: 10px; border-top: 1px solid #ccc; }
.apps { display: grid; grid-template-columns: repeat(9, 1fr); width: 294px; }
.app { border-bottom: 2px solid transparent; border-top: 1px solid transparent; }
.app.active { background: #53504b; border-bottom-color: #6db3e8; border-top-color: #53504b; }
.app.running { border-bottom-color: #6db3e8; margin: 0 3px; }
.tray { display: flex; align-items: center; gap: 4px; margin-left: auto; padding-right: 9px; }
.clock { display: flex; flex-direction: column; align-items: center; width: 42px; line-height: 12px; white-space: nowrap; }
.notes { position: relative; width: 24px; height: 24px; }
.badge { position: absolute; right: 0; bottom: 0; width: 9px; height: 9px; border: 1px solid #999; border-radius: 50%; background: #222; font-size: 8px; line-height: 9px; }
.pointer { position: absolute; left: 83px; top: 32px; width: 9px; height: 15px; }
</style>
